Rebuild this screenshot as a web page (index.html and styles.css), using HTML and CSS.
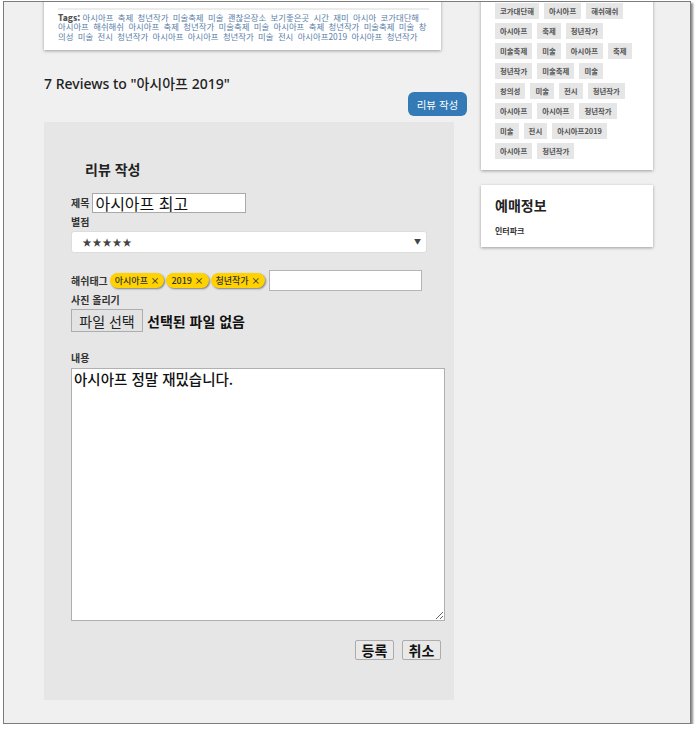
FILE: index.html
```html
<!DOCTYPE html>
<html lang="ko">
<head>
    <meta charset="UTF-8">
    <meta name="viewport" content="width=device-width, initial-scale=1.0">
    <title>아시아프 2019 - 리뷰</title>
    <link rel="stylesheet" href="styles.css">
</head>
<body>

    <div class="window">
        <div class="page">
            <main class="content">
                <!-- post tags -->
                <div class="tag-card">
                    <div class="tag-rule"></div>
                    <p class="post-tags"><b>Tags:</b> <a>아시아프</a> <a>축제</a> <a>청년작가</a> <a>미술축제</a> <a>미술</a> <a>괜찮은장소</a> <a>보기좋은곳</a> <a>시간</a> <a>재미</a> <a>아시아</a> <a>코가대단해</a> <a>아시아프</a> <a>해쉬해쉬</a> <a>아시아프</a> <a>축제</a> <a>청년작가</a> <a>미술축제</a> <a>미술</a> <a>아시아프</a> <a>축제</a> <a>청년작가</a> <a>미술축제</a> <a>미술</a> <a>창의성</a> <a>미술</a> <a>전시</a> <a>청년작가</a> <a>아시아프</a> <a>아시아프</a> <a>청년작가</a> <a>미술</a> <a>전시</a> <a>아시아프2019</a> <a>아시아프</a> <a>청년작가</a></p>
                </div>

                <h2 class="reviews-title">7 Reviews to "아시아프 2019"</h2>
                <div class="write-bar">
                    <button class="btn-write">리뷰 작성</button>
                </div>

                <!-- review form -->
                <section class="review-form">
                    <h3>리뷰 작성</h3>
                    <div class="row">
                        <label class="lbl" for="title">제목</label>
                        <input type="text" id="title" class="title-input" value="아시아프 최고">
                    </div>
                    <label class="lbl block">별점</label>
                    <div class="select-wrap">
                        <select class="rating">
                            <option>★★★★★</option>
                            <option>★★★★</option>
                            <option>★★★</option>
                        </select>
                    </div>
                    <div class="row hashtags">
                        <label class="lbl">해쉬태그</label>
                        <span class="chip">아시아프 ×</span>
                        <span class="chip">2019 ×</span>
                        <span class="chip">청년작가 ×</span>
                        <input type="text" class="tag-input">
                    </div>
                    <label class="lbl block">사진 올리기</label>
                    <div class="row file-row">
                        <button class="file-btn">파일 선택</button>
                        <span class="file-name">선택된 파일 없음</span>
                    </div>
                    <label class="lbl block gap-top">내용</label>
                    <textarea class="body-input">아시아프 정말 재밌습니다.</textarea>
                    <div class="actions">
                        <button class="btn-plain">등록</button>
                        <button class="btn-plain">취소</button>
                    </div>
                </section>
            </main>

            <aside class="sidebar">
                <div class="side-card cloud">
                    <div class="cloud-row"><a>코가대단해</a><a>아시아프</a><a>해쉬해쉬</a></div>
                    <div class="cloud-row"><a>아시아프</a><a>축제</a><a>청년작가</a></div>
                    <div class="cloud-row"><a>미술축제</a><a>미술</a><a>아시아프</a><a>축제</a></div>
                    <div class="cloud-row"><a>청년작가</a><a>미술축제</a><a>미술</a></div>
                    <div class="cloud-row"><a>창의성</a><a>미술</a><a>전시</a><a>청년작가</a></div>
                    <div class="cloud-row"><a>아시아프</a><a>아시아프</a><a>청년작가</a></div>
                    <div class="cloud-row"><a>미술</a><a>전시</a><a>아시아프2019</a></div>
                    <div class="cloud-row"><a>아시아프</a><a>청년작가</a></div>
                </div>
                <div class="side-card ticket">
                    <h4>예매정보</h4>
                    <a>인터파크</a>
                </div>
            </aside>
        </div>
    </div>

</body>
</html>
```

FILE: styles.css
```css
body {
    margin: 0;
    background: #fff;
    font-family: "Noto Sans", "Noto Sans CJK KR", sans-serif;
    color: #222;
}
.window {
    margin: 1px 0 0 3px;
    width: 686px;
    height: 721px;
    border: 1px solid #7c7c7c;
    background: #f0f0f0;
    overflow: hidden;
    box-shadow: 2px 2px 2px rgba(0, 0, 0, 0.45);
}
.page {
    display: grid;
    grid-template-columns: 410px 172px;
    column-gap: 27px;
    align-items: start;
    margin-top: -12px;
    padding-left: 40px;
}

/* post tags card */
.tag-card {
    width: 397px;
    box-sizing: border-box;
    background: #fff;
    padding: 18px 12px 9px 14px;
    box-shadow: 0 1px 3px rgba(0, 0, 0, 0.35);
}
.tag-rule {
    height: 2px;
    background: #ececec;
    margin-bottom: 3px;
}
.post-tags {
    margin: 0;
    font-family: "Noto Sans CJK KR", sans-serif;
    font-size: 8.4px;
    line-height: 9.4px;
    word-break: break-all;
    color: #666;
}
.post-tags b {
    color: #555;
    font-weight: 900;
}
.post-tags a {
    color: #5a80aa;
    margin-right: 2px;
}

.reviews-title {
    margin: 24px 0 0;
    font-size: 14px;
    font-weight: 500;
    line-height: 20px;
    color: #222;
}
.write-bar {
    display: flex;
    justify-content: flex-end;
    margin: -2px -13px 0 0;
}
.btn-write {
    width: 59px;
    height: 24px;
    border: none;
    border-radius: 6px;
    background: #337ab7;
    color: #fff;
    font-family: "Noto Sans CJK KR", sans-serif;
    font-size: 10.5px;
    padding: 0;
}

/* review form */
.review-form {
    margin-top: 6px;
    background: #e6e6e6;
    padding: 37px 9px 40px 27px;
    font-family: "Noto Sans CJK KR", sans-serif;
}
.review-form h3 {
    margin: 0 0 14px 14px;
    font-size: 14px;
    line-height: 20px;
    font-weight: 700;
    color: #222;
}
.row {
    display: flex;
    align-items: center;
}
.lbl {
    font-size: 10px;
    font-weight: 700;
    line-height: 14px;
    color: #333;
}
.lbl.block {
    display: block;
    margin-top: 2px;
}
.lbl.gap-top {
    margin-top: 19px;
}
.title-input {
    margin-left: 3px;
    width: 154px;
    height: 20px;
    box-sizing: border-box;
    border: 1px solid #a9a9a9;
    padding: 0 2px;
    font-family: "Noto Sans CJK KR", sans-serif;
    font-size: 16px;
    color: #111;
    background: #fff;
}
.select-wrap {
    position: relative;
    margin-top: 2px;
    width: 356px;
}
.rating {
    display: block;
    width: 100%;
    height: 22px;
    appearance: none;
    -webkit-appearance: none;
    border: 1px solid #ddd;
    border-radius: 3px;
    background: #fff;
    padding: 0 10px;
    font-size: 10px;
    color: #444;
}
.select-wrap::after {
    content: "▼";
    position: absolute;
    right: 6px;
    top: 6px;
    font-size: 7px;
    line-height: 9px;
    color: #444;
    pointer-events: none;
}
.hashtags {
    margin-top: 17px;
    gap: 2px;
}
.chip {
    height: 15px;
    line-height: 15px;
    padding: 0 5px;
    border-radius: 8px;
    background: #ffd200;
    box-shadow: 1px 1px 2px rgba(0, 0, 0, 0.45);
    font-size: 9px;
    font-weight: 500;
    color: #333;
}
.tag-input {
    margin-left: 2px;
    width: 153px;
    height: 21px;
    box-sizing: border-box;
    border: 1px solid #b5b5b5;
    background: #fff;
}
.file-row {
    margin-top: 2px;
    gap: 4px;
}
.file-btn {
    width: 72px;
    height: 23px;
    padding: 0;
    border: 1px solid #adadad;
    background: #e3e3e3;
    font-family: "Noto Sans CJK KR", sans-serif;
    font-size: 14px;
    color: #222;
}
.file-name {
    font-size: 14px;
    font-weight: 700;
    color: #111;
}
.body-input {
    display: block;
    margin-top: 3px;
    width: 374px;
    height: 253px;
    box-sizing: border-box;
    border: 1px solid #b0b0b0;
    padding: 0 2px;
    font-family: "Noto Sans CJK KR", sans-serif;
    font-size: 14.5px;
    line-height: 20px;
    font-weight: 500;
    color: #111;
    background: #fff;
}
.actions {
    display: flex;
    justify-content: flex-end;
    gap: 8px;
    margin-top: 19px;
    padding-right: 4px;
}
.btn-plain {
    width: 39px;
    height: 20px;
    padding: 0;
    border: 1px solid #acacac;
    border-radius: 2px;
    background: #e9e9e9;
    font-family: "Noto Sans CJK KR", sans-serif;
    font-size: 14px;
    font-weight: 700;
    line-height: 16px;
    color: #111;
}

/* sidebar */
.side-card {
    background: #fff;
    box-shadow: 0 1px 3px rgba(0, 0, 0, 0.35);
    font-family: "Noto Sans CJK KR", sans-serif;
}
.cloud {
    display: flex;
    flex-direction: column;
    gap: 4px;
    padding: 13px 14px 11px;
}
.cloud-row {
    display: flex;
    gap: 5px;
}
.cloud a {
    height: 16px;
    line-height: 16px;
    padding: 0 5px;
    background: #e6e6e6;
    font-size: 7.4px;
    font-weight: 700;
    color: #555;
}
.ticket {
    margin-top: 15px;
    padding: 9px 14px 10px;
}
.ticket h4 {
    margin: 0;
    font-size: 14px;
    line-height: 22px;
    font-weight: 700;
    color: #222;
}
.ticket a {
    display: block;
    margin-top: 9px;
    font-size: 8px;
    line-height: 12px;
    font-weight: 700;
    color: #333;
}
```
